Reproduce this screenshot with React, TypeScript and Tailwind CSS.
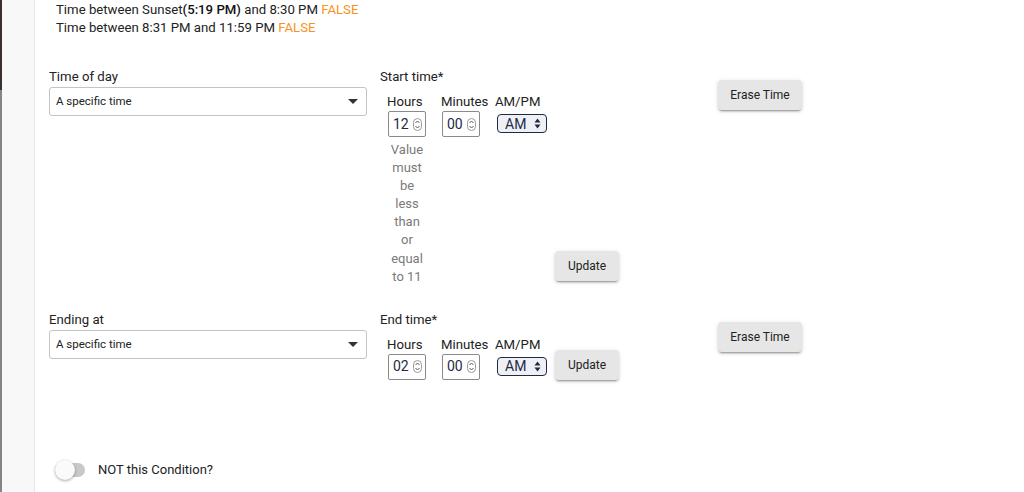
import React from "react";

const Spinner = () => (
  <svg width="9" height="13" viewBox="0 0 9 13" className="shrink-0">
    <rect x="0.5" y="0.5" width="8" height="12" rx="4" fill="#fff" stroke="#9a9a9a" />
    <path d="M2.5 5 L4.5 3 L6.5 5" fill="none" stroke="#555" strokeWidth="1" />
    <path d="M2.5 8 L4.5 10 L6.5 8" fill="none" stroke="#555" strokeWidth="1" />
  </svg>
);

const NumInput = ({ value }: { value: string }) => (
  <div className="w-[38px] h-[26px] border border-[#8a8a8a] rounded-[2px] flex items-center justify-between pl-[4px] pr-[3px] bg-white">
    <span className="text-[14px] text-[#1f2a44]">{value}</span>
    <Spinner />
  </div>
);

const AmSelect = () => (
  <div className="w-[50px] h-[19px] border border-[#1f2a44] rounded-[4px] bg-[#eef0f5] flex items-center justify-between pl-[7px] pr-[5px] mt-[3px]">
    <span className="text-[14px] leading-none text-[#1f2a44]">AM</span>
    <svg width="7" height="11" viewBox="0 0 7 11">
      <path d="M0.5 4.5 L3.5 0.5 L6.5 4.5 Z" fill="#1f2a44" />
      <path d="M0.5 6.5 L3.5 10.5 L6.5 6.5 Z" fill="#1f2a44" />
    </svg>
  </div>
);

const Btn = ({ children, className = "" }: { children: React.ReactNode; className?: string }) => (
  <div
    className={`h-[30px] rounded-[4px] bg-[#e6e6e6] flex items-center justify-center text-[12px] text-[#222] shadow-[0_3px_1px_-2px_rgba(0,0,0,0.2),0_2px_2px_0_rgba(0,0,0,0.14),0_1px_5px_0_rgba(0,0,0,0.12)] ${className}`}
  >
    {children}
  </div>
);

const Dropdown = ({ label }: { label: string }) => (
  <div className="w-[318px] flex flex-col">
    <div className="text-[13.2px] leading-[20px] text-[#222]">{label}</div>
    <div className="h-[29px] border border-[#c4c4c4] rounded-[3px] flex items-center justify-between pl-[6px] pr-[8px] bg-white">
      <span className="text-[11.5px] text-[#222]">A specific time</span>
      <svg width="10" height="5" viewBox="0 0 10 5">
        <path d="M0 0 L10 0 L5 5 Z" fill="#333" />
      </svg>
    </div>
  </div>
);

const TimeBlock = ({
  title,
  hours,
  error,
}: {
  title: string;
  hours: string;
  error?: boolean;
}) => (
  <div className="w-[338px] flex flex-col">
    <div className="text-[13.2px] leading-[20px] text-[#222]">{title}</div>
    <div className="flex pl-[7px] mt-[6px]">
      <div className="w-[54px] flex flex-col">
        <div className="text-[13.2px] leading-[18px] text-[#222]">Hours</div>
        <div className="pl-[1px]">
          <NumInput value={hours} />
        </div>
        {error && (
          <div className="w-[40px] mt-[4px] mb-[-5px] text-center text-[13px] leading-[18.1px] text-[#7a7a7a]">
            Value must be less than or equal to 11
          </div>
        )}
      </div>
      <div className="w-[54px] flex flex-col">
        <div className="text-[13.2px] leading-[18px] text-[#222]">Minutes</div>
        <div className="pl-[1px]">
          <NumInput value="00" />
        </div>
      </div>
      <div className="w-[60px] flex flex-col">
        <div className="text-[13.2px] leading-[18px] text-[#222]">AM/PM</div>
        <div className="pl-[2px]">
          <AmSelect />
        </div>
      </div>
      <Btn className="w-[64px] self-end">Update</Btn>
    </div>
  </div>
);

export default function App() {
  return (
    <div
      className="w-[1024px] h-[492px] overflow-hidden flex bg-white"
      style={{ fontFamily: "Roboto, 'Liberation Sans', sans-serif" }}
    >
      <div className="w-[2px] flex flex-col">
        <div className="h-[90px] bg-[#3b312c]" />
        <div className="flex-1 bg-[#858585]" />
      </div>
      <div className="w-[33px] bg-[#f8f8f8] border-r border-[#e8e8e8]" />
      <div className="flex-1 flex flex-col">
        <div className="pl-[21px] pt-[1px] text-[13.2px] leading-[18px] text-[#222]">
          <div>
            Time between Sunset<span className="font-medium text-[#111]">(5:19 PM)</span> and 8:30 PM{" "}
            <span className="text-[#f7931e]">FALSE</span>
          </div>
          <div>
            Time between 8:31 PM and 11:59 PM <span className="text-[#f7931e]">FALSE</span>
          </div>
        </div>

        <div className="flex pl-[14px] mt-[30px]">
          <Dropdown label="Time of day" />
          <div className="ml-[13px]">
            <TimeBlock title="Start time*" hours="12" error />
          </div>
          <Btn className="w-[84px] h-[29px] mt-[13px]">Erase Time</Btn>
        </div>

        <div className="flex pl-[14px] mt-[29px]">
          <Dropdown label="Ending at" />
          <div className="ml-[13px]">
            <TimeBlock title="End time*" hours="02" />
          </div>
          <Btn className="w-[84px] h-[29px] mt-[12px]">Erase Time</Btn>
        </div>

        <div className="flex items-center pl-[20px] mt-[80px]">
          <div className="relative w-[30px] h-[20px] flex items-center">
            <div className="w-[30px] h-[14px] rounded-full bg-[#c8c8c8]" />
            <div className="absolute left-0 top-0 w-[20px] h-[20px] rounded-full bg-[#fafafa] shadow-[0_1px_3px_rgba(0,0,0,0.35)]" />
          </div>
          <div className="ml-[13px] text-[13px] text-[#222]">NOT this Condition?</div>
        </div>
      </div>
    </div>
  );
}
